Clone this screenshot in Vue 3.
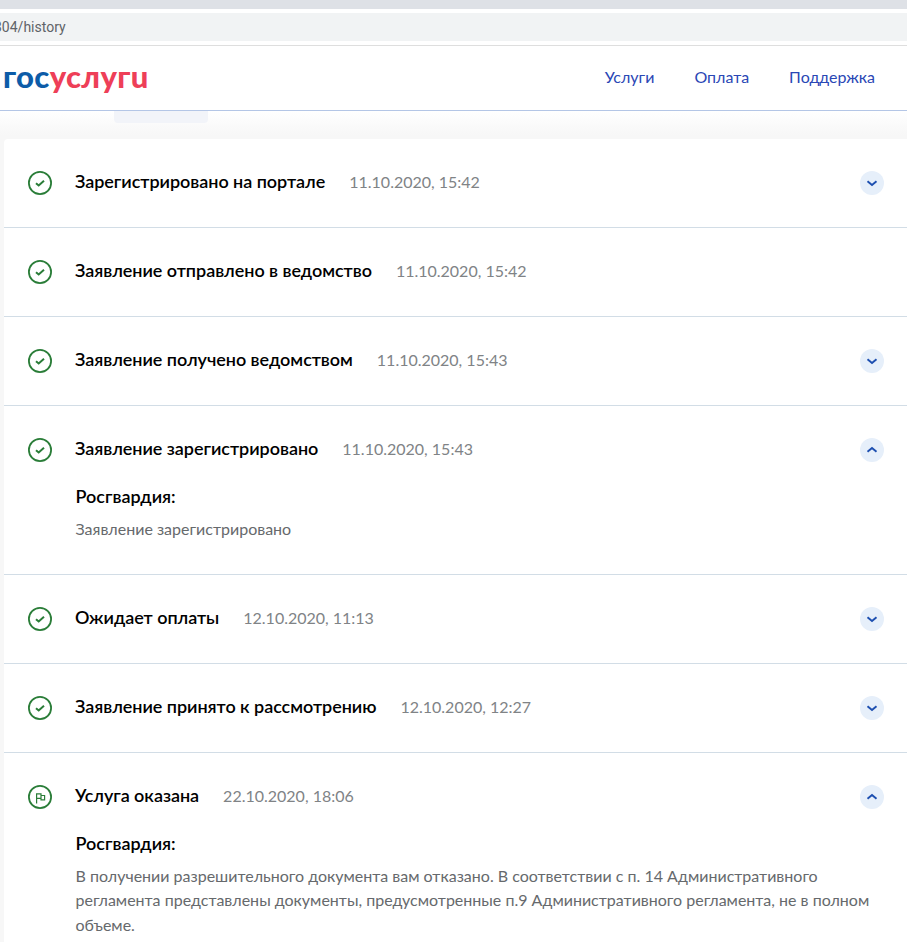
<template>
  <div class="page">
    <div class="browser-top"></div>
    <div class="url-bar"><span class="url-text">304/history</span></div>
    <header class="site-header">
      <div class="logo"><span class="logo-blue">гос</span><span class="logo-red">услугu</span></div>
      <nav class="nav">
        <a v-for="link in links" :key="link">{{ link }}</a>
      </nav>
    </header>
    <div class="content">
      <div class="tab-stub"></div>
      <div class="card">
        <div v-for="item in items" :key="item.title" class="row">
          <div class="row-head">
            <span class="status-icon">
              <svg v-if="!item.flag" width="24" height="24" viewBox="0 0 24 24" fill="none">
                <circle cx="12" cy="12" r="11.1" stroke="#2a7d38" stroke-width="1.8" />
                <path d="M8 12.2l2.7 2.3L16 9.8" stroke="#2a7d38" stroke-width="2" />
              </svg>
              <svg v-else width="24" height="24" viewBox="0 0 24 24" fill="none">
                <circle cx="12" cy="12" r="11.1" stroke="#2a7d38" stroke-width="1.8" />
                <path d="M8.6 18.4V8.8h4.4v1.7h3.6v4.4h-3.6v-1.6H8.6M13 10.5v2.8" stroke="#2a7d38" stroke-width="1.2" />
              </svg>
            </span>
            <span class="title">{{ item.title }}</span>
            <span class="date">{{ item.date }}</span>
            <span v-if="item.arrow" class="toggle">
              <svg width="12" height="12" viewBox="0 0 12 12" fill="none">
                <path v-if="item.arrow === 'down'" d="M1.5 4.2L6 8l4.5-3.8" stroke="#1d4fb0" stroke-width="1.9" />
                <path v-else d="M1.5 7.8L6 4l4.5 3.8" stroke="#1d4fb0" stroke-width="1.9" />
              </svg>
            </span>
          </div>
          <div v-if="item.text" class="row-body">
            <div class="org">Росгвардия:</div>
            <p class="note">{{ item.text }}</p>
          </div>
        </div>
      </div>
    </div>
  </div>
</template>

<script setup>
const links = ['Услуги', 'Оплата', 'Поддержка']

const items = [
  { title: 'Зарегистрировано на портале', date: '11.10.2020, 15:42', arrow: 'down' },
  { title: 'Заявление отправлено в ведомство', date: '11.10.2020, 15:42' },
  { title: 'Заявление получено ведомством', date: '11.10.2020, 15:43', arrow: 'down' },
  { title: 'Заявление зарегистрировано', date: '11.10.2020, 15:43', arrow: 'up', text: 'Заявление зарегистрировано' },
  { title: 'Ожидает оплаты', date: '12.10.2020, 11:13', arrow: 'down' },
  { title: 'Заявление принято к рассмотрению', date: '12.10.2020, 12:27', arrow: 'down' },
  {
    title: 'Услуга оказана',
    date: '22.10.2020, 18:06',
    arrow: 'up',
    flag: true,
    text: 'В получении разрешительного документа вам отказано. В соответствии с п. 14 Административного регламента представлены документы, предусмотренные п.9 Административного регламента, не в полном объеме.'
  }
]
</script>

<style>
html, body { margin: 0; background: #fff; overflow: hidden; }
</style>

<style scoped>
.page {
  height: 942px;
  overflow: hidden;
  font-family: Lato, "Noto Sans", "Open Sans", sans-serif;
  background: #fff;
}
.browser-top { height: 9px; background: #dee1e6; }
.url-bar {
  height: 28px;
  margin-top: 4px;
  background: #f1f3f4;
  display: flex;
  align-items: center;
  font-family: Roboto, sans-serif;
  font-size: 14px;
  color: #5f6368;
}
.url-text { margin-left: -6px; }
.site-header {
  margin-top: 4px;
  height: 64px;
  border-top: 1px solid #dedede;
  border-bottom: 1px solid #b4c6e6;
  display: flex;
  align-items: center;
  justify-content: space-between;
  padding: 0 32px 0 3px;
}
.logo { font-size: 31px; font-weight: 900; line-height: 1; margin-bottom: 4px; letter-spacing: 0.35px; }
.logo-blue { color: #0d5ca8; }
.logo-red { color: #ee3f58; }
.nav { display: flex; gap: 40px; font-size: 16px; color: #2a47b5; padding-bottom: 4px; }
.content {
  position: relative;
  padding: 28px 0 0 4px;
  background: linear-gradient(#fff, #f7f7f7 24px, #f7f7f7);
}
.tab-stub {
  position: absolute;
  left: 114px;
  top: 0;
  width: 94px;
  height: 12px;
  background: #f2f4f9;
  border-radius: 0 0 4px 4px;
}
.card { background: #fff; border-radius: 4px 0 0 0; }
.row { border-bottom: 1px solid #d2dde6; }
.row-head {
  height: 88px;
  display: flex;
  align-items: center;
  padding: 0 23px 0 24px;
}
.status-icon { width: 24px; height: 24px; margin-right: 23px; flex: none; }
.status-icon svg, .toggle svg { display: block; }
.title {
  font-size: 18px;
  font-weight: 600;
  letter-spacing: -0.04px;
  color: #000;
  margin-right: 24px;
  padding-bottom: 4px;
}
.date { font-size: 16px; color: #808386; padding-bottom: 3px; }
.toggle {
  margin-left: auto;
  width: 24px;
  height: 24px;
  border-radius: 50%;
  background: #e6effa;
  display: flex;
  align-items: center;
  justify-content: center;
}
.row-body { padding: 0 24px 32.6px 71.5px; margin-top: -10px; }
.org { font-size: 18px; font-weight: 600; color: #000; line-height: 24px; }
.note { margin: 9px 0 0; font-size: 16px; line-height: 24.4px; color: #66696c; }
</style>
